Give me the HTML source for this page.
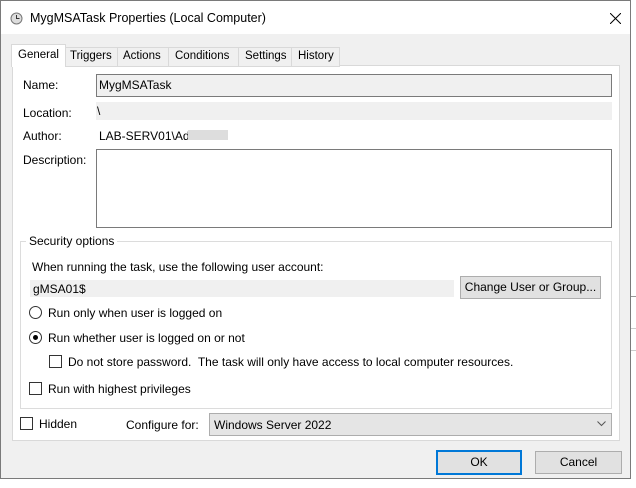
<!DOCTYPE html>
<html><head><style>
body{margin:0;width:636px;height:488px;background:#fff;position:relative;overflow:hidden;font-family:"Liberation Sans",sans-serif;font-size:12px;color:#000}
.a{position:absolute;white-space:nowrap}
.win{position:absolute;left:0;top:0;width:631px;height:479px;background:#f0f0f0}
.cb{position:absolute;width:11px;height:11px;border:1px solid #333;background:#fff}
.rb{position:absolute;width:11px;height:11px;border:1px solid #333;border-radius:50%;background:#fff}
.btn{position:absolute;background:#e1e1e1;border:1px solid #adadad;text-align:center}
.t{font-size:11.5px}
</style></head><body>
<div class="a" style="left:630px;top:296px;width:6px;height:1px;background:#999"></div>
<div class="a" style="left:630px;top:328px;width:6px;height:1px;background:#ccc"></div>
<div class="a" style="left:630px;top:350px;width:6px;height:1px;background:#ccc"></div>
<div class="win">
 <div class="a" style="left:0;top:0;width:631px;height:34px;background:#fff"></div>
 <div class="a" style="left:0;top:0;width:629px;height:477px;border:1px solid #7a7a7a"></div>
 <svg class="a" style="left:10px;top:12px" width="13" height="13" viewBox="0 0 13 13"><circle cx="6.5" cy="6.5" r="5.5" fill="#ddd" stroke="#777"/><path d="M6.5 3v3.5h3" stroke="#333" fill="none"/></svg>
 <div class="a" style="left:30px;top:11px;font-size:12.5px">MygMSATask Properties (Local Computer)</div>
 <svg class="a" style="left:610px;top:13px" width="11" height="11"><path d="M0 0L11 11M11 0L0 11" stroke="#000"/></svg>
 <div class="a" style="left:12px;top:65px;width:606px;height:374px;background:#fff;border:1px solid #d9d9d9"></div>
 <div class="a" style="left:11px;top:44px;width:53px;height:22px;background:#fff;border:1px solid #d9d9d9;border-bottom:none"></div>
 <div class="a t" style="left:18px;top:49px">General</div>
 <div class="a" style="left:65px;top:47px;width:51px;height:18px;background:#f0f0f0;border:1px solid #d9d9d9"></div><div class="a t" style="left:70px;top:50px">Triggers</div>
 <div class="a" style="left:117px;top:47px;width:50px;height:18px;background:#f0f0f0;border:1px solid #d9d9d9"></div><div class="a t" style="left:123px;top:50px">Actions</div>
 <div class="a" style="left:168px;top:47px;width:69px;height:18px;background:#f0f0f0;border:1px solid #d9d9d9"></div><div class="a t" style="left:175px;top:50px">Conditions</div>
 <div class="a" style="left:238px;top:47px;width:52px;height:18px;background:#f0f0f0;border:1px solid #d9d9d9"></div><div class="a t" style="left:245px;top:50px">Settings</div>
 <div class="a" style="left:291px;top:47px;width:47px;height:18px;background:#f0f0f0;border:1px solid #d9d9d9"></div><div class="a t" style="left:298px;top:50px">History</div>
 <div class="a" style="left:23px;top:78px">Name:</div>
 <div class="a" style="left:96px;top:74px;width:514px;height:21px;background:#f0f0f0;border:1px solid #7a7a7a"></div>
 <div class="a" style="left:99px;top:78px">MygMSATask</div>
 <div class="a" style="left:23px;top:106px">Location:</div>
 <div class="a" style="left:96px;top:102px;width:516px;height:18px;background:#f0f0f0"></div>
 <div class="a" style="left:97px;top:104px">\</div>
 <div class="a" style="left:23px;top:129px">Author:</div>
 <div class="a" style="left:99px;top:129px">LAB-SERV01\Ad</div>
 <div class="a" style="left:188px;top:130px;width:40px;height:10px;background:#ddd"></div>
 <div class="a" style="left:23px;top:153px">Description:</div>
 <div class="a" style="left:96px;top:149px;width:514px;height:77px;background:#fff;border:1px solid #7a7a7a"></div>
 <div class="a" style="left:20px;top:241px;width:590px;height:166px;border:1px solid #dcdcdc"></div>
 <div class="a" style="left:26px;top:234px;background:#fff;padding:0 3px">Security options</div>
 <div class="a" style="left:32px;top:260px">When running the task, use the following user account:</div>
 <div class="a" style="left:30px;top:280px;width:424px;height:17px;background:#f0f0f0"></div>
 <div class="a" style="left:33px;top:282px">gMSA01$</div>
 <div class="btn" style="left:460px;top:276px;width:139px;height:21px;line-height:21px">Change User or Group...</div>
 <div class="rb" style="left:29px;top:306px"></div><div class="a" style="left:48px;top:306px">Run only when user is logged on</div>
 <div class="rb" style="left:29px;top:331px"></div><div class="a" style="left:33px;top:335px;width:5px;height:5px;border-radius:50%;background:#000"></div><div class="a" style="left:48px;top:331px">Run whether user is logged on or not</div>
 <div class="cb" style="left:49px;top:355px"></div><div class="a" style="left:68px;top:355px">Do not store password.&nbsp; The task will only have access to local computer resources.</div>
 <div class="cb" style="left:29px;top:382px"></div><div class="a" style="left:48px;top:382px">Run with highest privileges</div>
 <div class="cb" style="left:20px;top:417px"></div><div class="a" style="left:39px;top:417px">Hidden</div>
 <div class="a" style="left:126px;top:418px">Configure for:</div>
 <div class="a" style="left:209px;top:413px;width:401px;height:21px;background:#e5e5e5;border:1px solid #adadad"></div>
 <div class="a" style="left:214px;top:418px">Windows Server 2022</div>
 <svg class="a" style="left:597px;top:421px" width="9" height="6"><path d="M0.5 0.5L4.5 4.5L8.5 0.5" stroke="#555" fill="none"/></svg>
 <div class="btn" style="left:436px;top:450px;width:82px;height:21px;line-height:21px;border:2px solid #0078d7">OK</div>
 <div class="btn" style="left:535px;top:451px;width:85px;height:21px;line-height:21px">Cancel</div>
</div>
</body></html>
